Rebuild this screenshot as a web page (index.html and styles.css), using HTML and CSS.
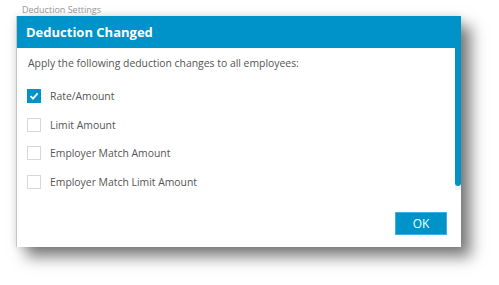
FILE: index.html
```html
<!DOCTYPE html>
<html lang="en">
<head>
    <meta charset="UTF-8">
    <title>Deduction Changed</title>
    <link rel="stylesheet" href="styles.css">
</head>
<body>
    <div class="behind">Deduction Settings</div>
    <div class="dialog">
        <div class="dialog-header">Deduction Changed</div>
        <div class="dialog-main">
            <div class="dialog-body">
                <p class="intro">Apply the following deduction changes to all employees:</p>
                <label class="option">
                    <span class="box checked">
                        <svg width="10" height="10" viewBox="0 0 10 10"><path d="M1.5 5.2 L4 7.6 L8.6 2.4" fill="none" stroke="#fff" stroke-width="1.8"/></svg>
                    </span>
                    Rate/Amount
                </label>
                <label class="option"><span class="box"></span>Limit Amount</label>
                <label class="option"><span class="box"></span>Employer Match Amount</label>
                <label class="option"><span class="box"></span>Employer Match Limit Amount</label>
                <div class="actions">
                    <button class="btn">OK</button>
                </div>
            </div>
            <div class="scrollbar"><div class="thumb"></div></div>
        </div>
    </div>
</body>
</html>
```

FILE: styles.css
```css
body {
    margin: 0;
    width: 499px;
    height: 285px;
    background: #fff;
    font-family: 'Open Sans', 'Liberation Sans', sans-serif;
    overflow: hidden;
}

.behind {
    height: 16px;
    padding-left: 22px;
    font-size: 9px;
    line-height: 19px;
    color: #999;
}

.dialog {
    margin-left: 16px;
    width: 445px;
    height: 231px;
    display: flex;
    flex-direction: column;
    background: #fff;
    border-left: 1px solid #c6c6c6;
    box-sizing: border-box;
    box-shadow: 10px 10px 14px rgba(0,0,0,0.5), 0 0 8px rgba(0,0,0,0.12);
    position: relative;
}

.dialog-header {
    height: 32px;
    background: #0093c9;
    color: #fff;
    font-size: 13px;
    font-weight: 700;
    line-height: 33px;
    padding-left: 9px;
}

.dialog-main {
    flex: 1;
    display: flex;
}

.dialog-body {
    flex: 1;
    padding: 0 0 0 10px;
    display: flex;
    flex-direction: column;
}

.intro {
    margin: 8px 0 18px 1px;
    font-size: 10.4px;
    color: #555;
    line-height: 15px;
}

.option {
    display: flex;
    align-items: center;
    gap: 9px;
    height: 14px;
    margin-bottom: 14.7px;
    font-size: 10.4px;
    color: #555;
}

.box {
    width: 14px;
    height: 14px;
    box-sizing: border-box;
    border: 1px solid #d8d8d8;
    background: #fff;
    display: flex;
    align-items: center;
    justify-content: center;
}

.box.checked {
    background: #0093c9;
    border-color: #0093c9;
}

.actions {
    display: flex;
    justify-content: flex-end;
    padding-right: 8px;
    margin-top: 8px;
}

.btn {
    width: 52px;
    height: 23px;
    border: 1px solid #42b0dd;
    background: #0093c9;
    color: #fff;
    font-family: inherit;
    font-size: 12px;
    padding: 0;
}

.scrollbar {
    width: 6px;
    background: #f2f2f2;
    height: 142px;
}

.thumb {
    height: 138px;
    background: #0093c9;
    border-radius: 0 0 3px 3px;
}
```
